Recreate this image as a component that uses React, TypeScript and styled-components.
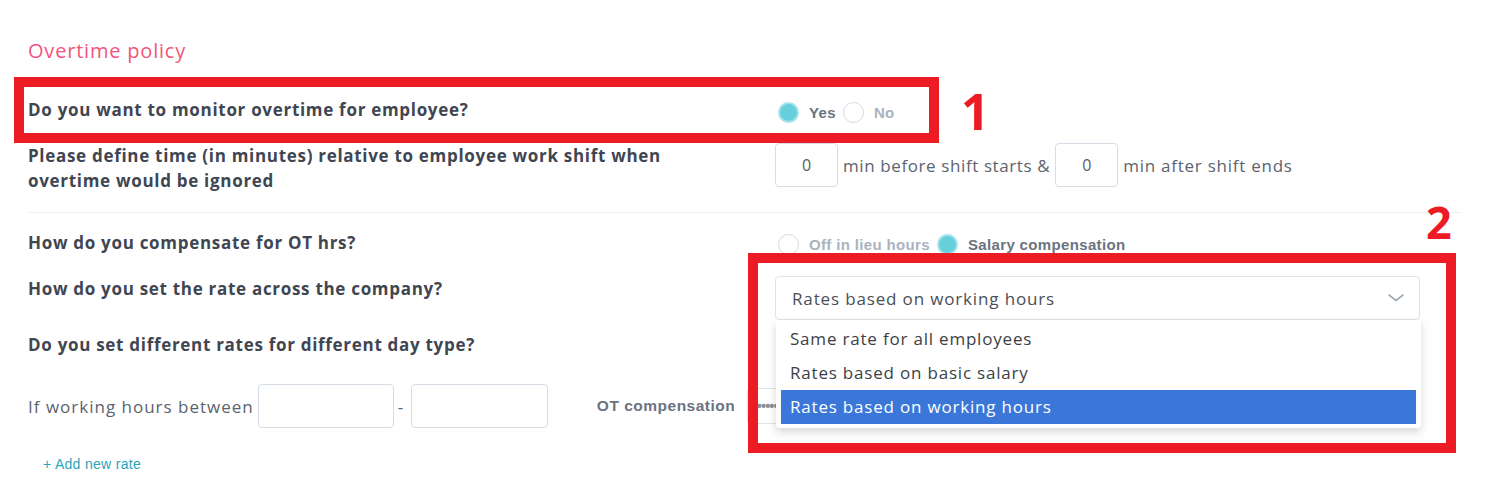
import React from "react";
import styled, { createGlobalStyle } from "styled-components";

const GlobalStyle = createGlobalStyle`
  html, body {
    margin: 0;
    padding: 0;
    background: #ffffff;
  }
  * {
    box-sizing: border-box;
  }
`;

const Page = styled.div`
  position: relative;
  width: 1487px;
  height: 499px;
  overflow: hidden;
  padding-left: 28px;
  font-family: "Open Sans", "Liberation Sans", sans-serif;
  color: #3f4652;
`;

const Title = styled.h3`
  margin: 39px 0 0;
  height: 24px;
  line-height: 24px;
  font-size: 20px;
  font-weight: 400;
  letter-spacing: 0.8px;
  color: #f2557b;
`;

const Row = styled.div<{ $top: number; $h: number; $align?: string }>`
  display: flex;
  align-items: ${(p) => p.$align || "center"};
  margin-top: ${(p) => p.$top}px;
  height: ${(p) => p.$h}px;
`;

const Label = styled.div<{ $pad?: number }>`
  width: 747px;
  flex-shrink: 0;
  padding-top: ${(p) => p.$pad || 0}px;
  font-size: 17px;
  font-weight: 700;
  line-height: 25px;
  letter-spacing: 0.7px;
  color: #3f4652;
`;

const Divider = styled.hr`
  margin: 25px 0 0;
  width: 1434px;
  border: none;
  border-top: 1px solid #eceff3;
  height: 0;
`;

const RadioGroup = styled.div<{ $pad?: number }>`
  display: flex;
  align-items: center;
  margin-left: 3px;
  padding-top: ${(p) => p.$pad || 0}px;
`;

const RadioCircle = styled.span<{ $checked?: boolean }>`
  width: 21px;
  height: 21px;
  border-radius: 50%;
  flex-shrink: 0;
  border: ${(p) => (p.$checked ? "2px solid #a6e3ec" : "1px solid #d3dbe3")};
  background: ${(p) => (p.$checked ? "#67cfdc" : "#ffffff")};
`;

const RadioText = styled.span<{ $checked?: boolean }>`
  margin: 0 7px 0 10px;
  font-family: "Liberation Sans", "Open Sans", sans-serif;
  font-size: 15px;
  font-weight: 700;
  letter-spacing: 0.35px;
  color: ${(p) => (p.$checked ? "#6b7380" : "#a9b3bf")};
`;

const Radio = ({ label, checked }: { label: string; checked?: boolean }) => (
  <>
    <RadioCircle $checked={checked} />
    <RadioText $checked={checked}>{label}</RadioText>
  </>
);

const NumberBox = styled.div<{ $w: number }>`
  width: ${(p) => p.$w}px;
  height: 44px;
  border: 1px solid #d5dee6;
  border-radius: 4px;
  display: flex;
  align-items: center;
  justify-content: center;
  font-size: 16px;
  color: #555c66;
  background: #fff;
  flex-shrink: 0;
`;

const PlainText = styled.span<{ $ml?: number; $mr?: number; $ls?: number }>`
  margin-left: ${(p) => p.$ml || 0}px;
  margin-right: ${(p) => p.$mr || 0}px;
  font-size: 17px;
  letter-spacing: ${(p) => p.$ls ?? 0.6}px;
  color: #5b636e;
  white-space: nowrap;
`;

const SelectWrap = styled.div`
  position: relative;
  width: 645px;
  height: 44px;
  z-index: 5;
`;

const SelectBox = styled.div`
  height: 44px;
  border: 1px solid #dfe3e8;
  border-radius: 4px;
  display: flex;
  align-items: center;
  justify-content: space-between;
  padding: 0 14px 0 16px;
  font-size: 17px;
  letter-spacing: 0.85px;
  color: #4a4f57;
  background: #fff;
`;

const Menu = styled.ul`
  position: absolute;
  top: 44px;
  left: 1px;
  width: 645px;
  margin: 0;
  padding: 2px 5px 4px;
  list-style: none;
  background: #fff;
  border-radius: 0 0 4px 4px;
  box-shadow: 0 4px 10px rgba(0, 0, 0, 0.16);
`;

const MenuItem = styled.li<{ $active?: boolean }>`
  height: 34px;
  line-height: 34px;
  padding-left: 9px;
  font-size: 17px;
  letter-spacing: 0.8px;
  color: ${(p) => (p.$active ? "#ffffff" : "#3b3f45")};
  background: ${(p) => (p.$active ? "#3a77d8" : "transparent")};
`;

const RateLabel = styled.span`
  margin-left: 49px;
  width: 150px;
  flex-shrink: 0;
  font-family: "Liberation Sans", sans-serif;
  font-size: 15.5px;
  font-weight: 700;
  letter-spacing: 0.5px;
  color: #6b7380;
`;

const OtSelect = styled.div`
  width: 300px;
  height: 36px;
  border: 1px solid #e0e3e7;
  border-radius: 3px;
  display: flex;
  align-items: center;
  padding-left: 8px;
  font-size: 19px;
  letter-spacing: -3px;
  color: #8a929c;
`;

const AddRate = styled.div`
  margin: 26px 0 0 15px;
  line-height: 20px;
  font-family: "Liberation Sans", sans-serif;
  font-size: 14px;
  letter-spacing: 0.3px;
  color: #2ba5bb;
`;

const Marker = styled.div<{ $x: number; $y: number; $w: number; $h: number }>`
  position: absolute;
  left: ${(p) => p.$x}px;
  top: ${(p) => p.$y}px;
  width: ${(p) => p.$w}px;
  height: ${(p) => p.$h}px;
  border: 10px solid #ed1c24;
  z-index: 20;
  pointer-events: none;
`;

const MarkerNumber = styled.div<{ $x: number; $y: number; $size: number }>`
  position: absolute;
  left: ${(p) => p.$x}px;
  top: ${(p) => p.$y}px;
  font-family: "Open Sans", "Liberation Sans", sans-serif;
  font-weight: 700;
  font-size: ${(p) => p.$size}px;
  line-height: 1;
  color: #ed1c24;
  z-index: 20;
`;

const Chevron = () => (
  <svg width="18" height="10" viewBox="0 0 18 10">
    <polyline
      points="2,2 9,7.5 16,2"
      fill="none"
      stroke="#a3abb5"
      strokeWidth="1.6"
      strokeLinecap="round"
      strokeLinejoin="round"
    />
  </svg>
);

export default function App() {
  return (
    <Page>
      <GlobalStyle />
      <Title>Overtime policy</Title>

      <Row $top={25} $h={42}>
        <Label>Do you want to monitor overtime for employee?</Label>
        <RadioGroup $pad={6}>
          <Radio label="Yes" checked />
          <Radio label="No" />
        </RadioGroup>
      </Row>

      <Row $top={13} $h={44}>
        <Label $pad={6}>
          Please define time (in minutes) relative to employee work shift when
          <br />
          overtime would be ignored
        </Label>
        <NumberBox $w={63}>0</NumberBox>
        <PlainText $ml={5} $mr={5}>min before shift starts &amp;</PlainText>
        <NumberBox $w={63}>0</NumberBox>
        <PlainText $ml={5} $ls={0.75}>min after shift ends</PlainText>
      </Row>

      <Divider />

      <Row $top={17} $h={24}>
        <Label>How do you compensate for OT hrs?</Label>
        <RadioGroup $pad={4}>
          <Radio label="Off in lieu hours" />
          <Radio label="Salary compensation" checked />
        </RadioGroup>
      </Row>

      <Row $top={22} $h={44} $align="flex-start">
        <Label>How do you set the rate across the company?</Label>
        <SelectWrap>
          <SelectBox>
            <span>Rates based on working hours</span>
            <Chevron />
          </SelectBox>
          <Menu>
            <MenuItem>Same rate for all employees</MenuItem>
            <MenuItem>Rates based on basic salary</MenuItem>
            <MenuItem $active>Rates based on working hours</MenuItem>
          </Menu>
        </SelectWrap>
      </Row>

      <Row $top={12} $h={24}>
        <Label>Do you set different rates for different day type?</Label>
      </Row>

      <Row $top={28} $h={44}>
        <PlainText $mr={4} $ls={1}>
          If working hours between
        </PlainText>
        <NumberBox $w={136} />
        <PlainText $ml={4} $mr={7}>-</PlainText>
        <NumberBox $w={137} />
        <RateLabel>OT compensation</RateLabel>
        <OtSelect>•••••</OtSelect>
      </Row>

      <AddRate>+ Add new rate</AddRate>

      <Marker $x={14} $y={77} $w={925} $h={66} />
      <MarkerNumber $x={961} $y={86} $size={50}>1</MarkerNumber>
      <Marker $x={748} $y={253} $w={708} $h={200} />
      <MarkerNumber $x={1426} $y={199} $size={45}>2</MarkerNumber>
    </Page>
  );
}
